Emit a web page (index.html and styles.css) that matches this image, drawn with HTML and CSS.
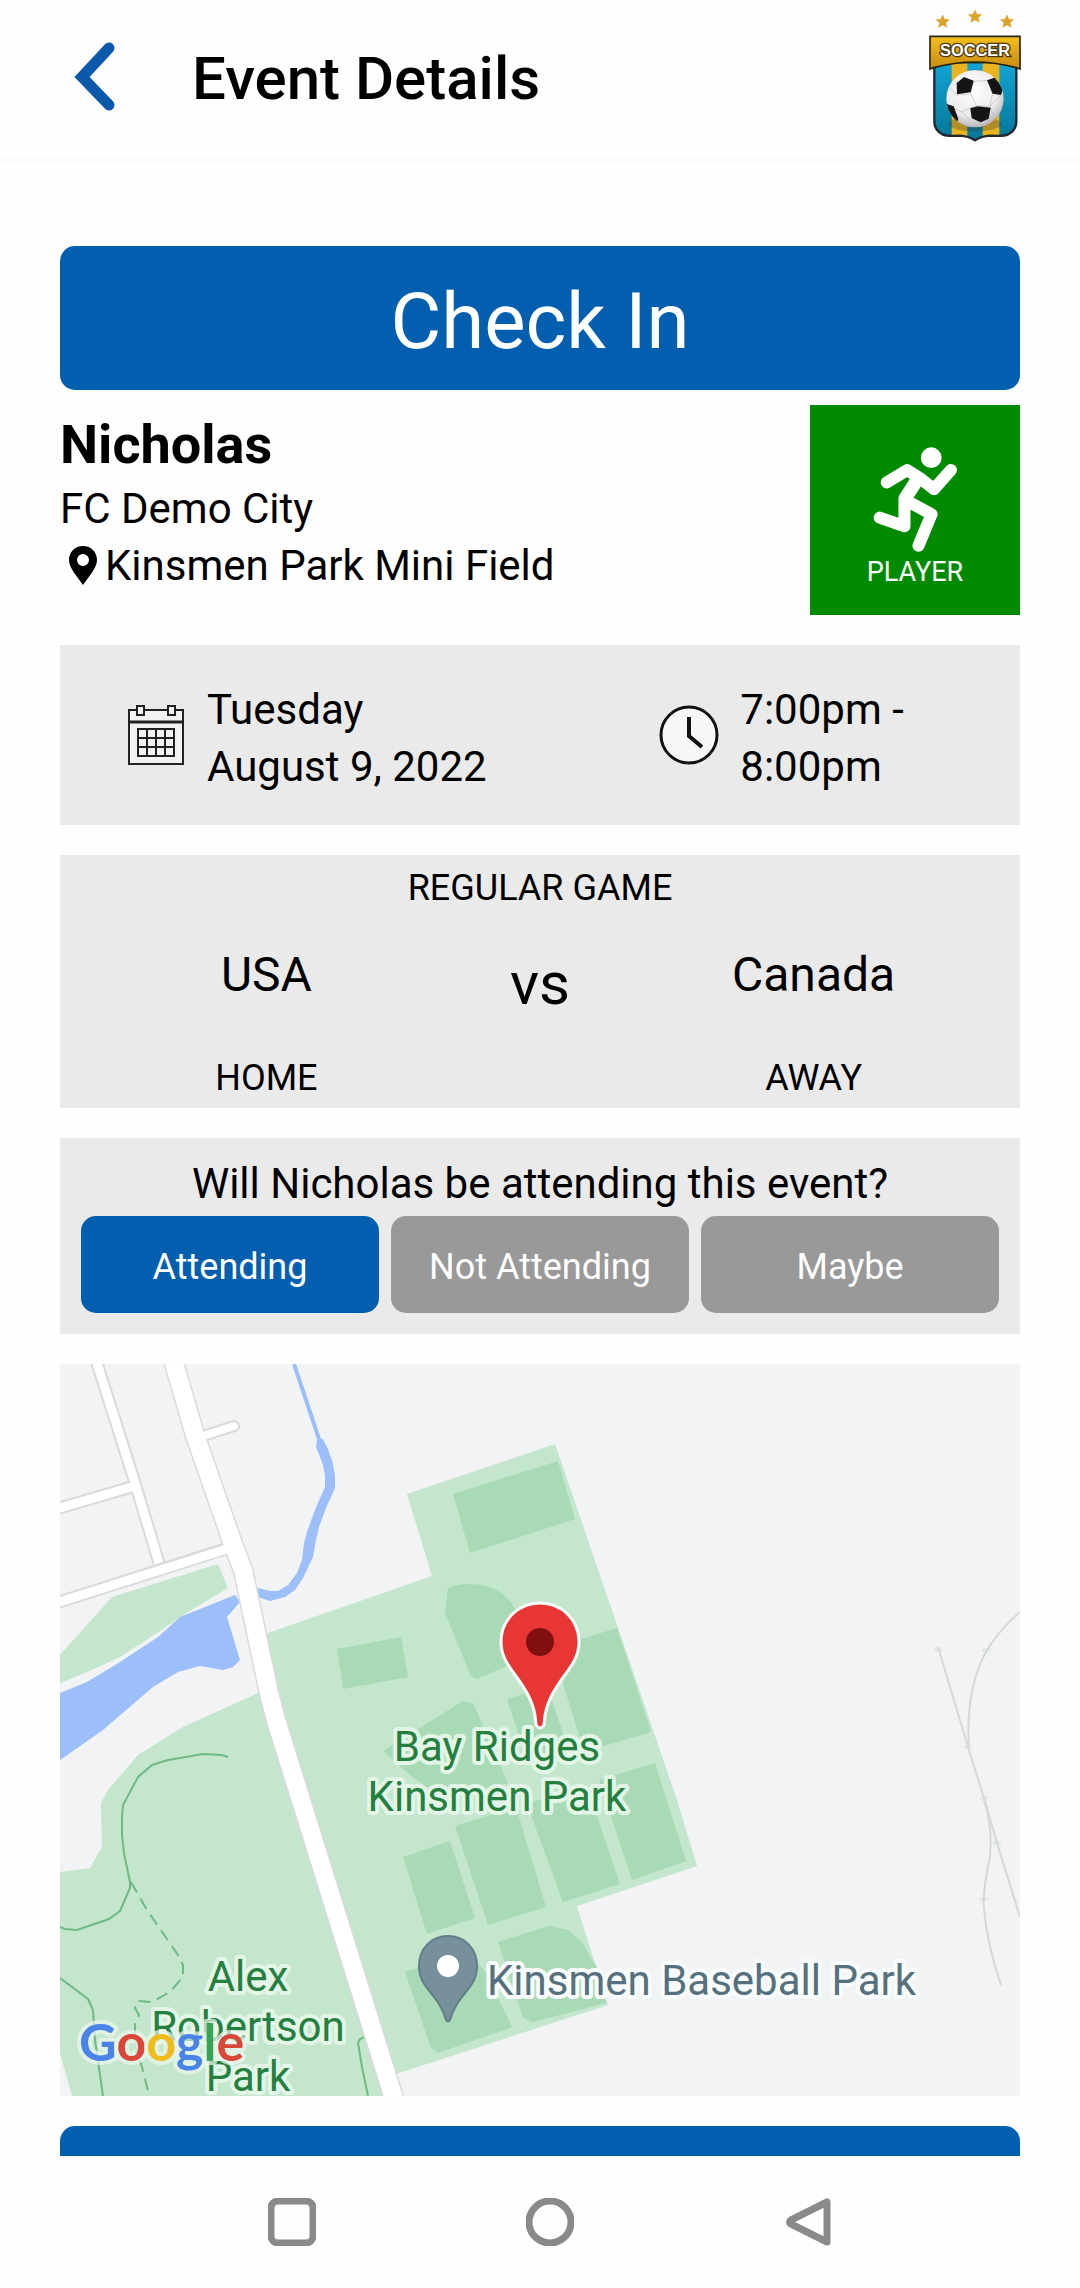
FILE: index.html
```html
<!DOCTYPE html>
<html lang="en">
<head>
<meta charset="utf-8">
<meta name="viewport" content="width=device-width, initial-scale=1">
<title>Event Details</title>
<link rel="stylesheet" href="styles.css">
</head>
<body>
<header class="topbar">
  <button class="back" aria-label="Back">
    <svg width="46" height="74" viewBox="0 0 46 74" fill="none" stroke="#0b59ab" stroke-width="11" stroke-linecap="round" stroke-linejoin="miter"><path d="M38 6L11 35L38 63"/></svg>
  </button>
  <h1 class="title">Event Details</h1>
  <svg class="crest" viewBox="0 0 276 420" role="img" aria-label="Soccer club crest">
    <defs>
      <linearGradient id="gold" x1="0" y1="0" x2="0" y2="1"><stop offset="0" stop-color="#f3bf1c"/><stop offset="1" stop-color="#c98a12"/></linearGradient>
      <linearGradient id="sky" x1="0" y1="0" x2="0" y2="1"><stop offset="0" stop-color="#12a5d6"/><stop offset="1" stop-color="#077596"/></linearGradient>
      <radialGradient id="ball" cx=".45" cy=".35" r=".7"><stop offset="0" stop-color="#fff"/><stop offset=".65" stop-color="#ececee"/><stop offset="1" stop-color="#a9a9ae"/></radialGradient>
      <clipPath id="shield"><path d="M16 160H262V338Q262 362 238 376Q225 382 190 380Q160 380 138 394Q116 380 86 380Q53 382 40 376Q16 362 16 338Z"/></clipPath>
      <clipPath id="ballClip"><circle cx="138" cy="269" r="86"/></clipPath>
      <path id="star" d="M0-20L6-7L20-6L9 3L13 17L0 10L-13 17L-9 3L-20-6L-6-7Z"/>
    </defs>
    <g fill="#dca426" stroke="#c98f1f" stroke-width="1">
      <use href="#star" x="41" y="38"/><use href="#star" x="138" y="23"/><use href="#star" x="234" y="38"/>
    </g>
    <g clip-path="url(#shield)">
      <rect x="16" y="160" width="246" height="236" fill="url(#sky)"/>
      <rect x="68" y="160" width="47" height="236" fill="#eab31f"/>
      <rect x="161" y="160" width="50" height="236" fill="#eab31f"/>
      <ellipse cx="138" cy="345" rx="80" ry="22" fill="#333" opacity=".3"/>
    </g>
    <path d="M16 160H262V338Q262 362 238 376Q225 382 190 380Q160 380 138 394Q116 380 86 380Q53 382 40 376Q16 362 16 338Z" fill="none" stroke="#20282b" stroke-width="7"/>
    <path d="M122 184Q138 180 156 184V190H122Z" fill="#123"/>
    <circle cx="138" cy="269" r="86" fill="url(#ball)"/>
    <g clip-path="url(#ballClip)">
      <path d="M125 255L133 217L178 214M125 255L85 258M125 255L142 290M182 292L191 256L178 214M182 292L215 258M85 258L52 230M98 308L142 290M142 290L182 292M98 308L55 290M98 308L125 335M182 292L200 330" fill="none" stroke="#bdbdc2" stroke-width="2"/>
      <g fill="#151515">
        <path d="M83 222L105 204L134 215L125 250L84 256Z"/>
        <path d="M174 214L200 205L222 240L216 258L191 254Z"/>
        <path d="M124 298L146 292L185 296L179 329L155 340L128 328Z"/>
        <path d="M50 284L74 292L88 330L80 350L48 320Z"/>
      </g>
    </g>
    <path d="M3 82H273V180L262 176Q138 142 14 176L3 180Z" fill="url(#gold)" stroke="#2a2412" stroke-width="5"/>
    <text x="138" y="142" class="crest-text">SOCCER</text>
  </svg>
</header>

<main class="content">
  <button class="check-in">Check In</button>

  <section class="profile">
    <div class="profile-info">
      <h2 class="name">Nicholas</h2>
      <p>FC Demo City</p>
      <p class="place">
        <svg width="28" height="39" viewBox="0 0 28 39"><path fill-rule="evenodd" d="M14 0C6 0 0 6 0 14C0 22 8 30 14 39C20 30 28 22 28 14C28 6 22 0 14 0ZM14 8A6 6 0 1 1 14 20A6 6 0 1 1 14 8Z"/></svg>
        Kinsmen Park Mini Field
      </p>
    </div>
    <div class="role">
      <svg width="87" height="107" viewBox="0 0 260 320" fill="none" stroke="#fff" stroke-width="36" stroke-linecap="round" stroke-linejoin="round">
        <circle cx="177" cy="38" r="31" fill="#fff" stroke="none"/>
        <path d="M44 112L105 75L142 98L185 132L236 75"/>
        <path d="M138 100L100 158" stroke-width="40"/>
        <path d="M97 160V243L23 217M108 169L178 207L139 301"/>
      </svg>
      <span>PLAYER</span>
    </div>
  </section>

  <section class="card schedule">
    <div class="slot">
      <svg width="60" height="60" viewBox="0 0 60 60" fill="none" stroke="#222" stroke-width="2">
        <path d="M3 5H57V59H3Z" fill="#f2f2f2"/><path d="M3 17H57" stroke-width="3"/>
        <rect x="11" y="1" width="7" height="9" fill="#f2f2f2"/><rect x="42" y="1" width="7" height="9" fill="#f2f2f2"/>
        <path d="M12 24H48V51H12ZM12 33H48M12 42H48M21 24V51M30 24V51M39 24V51"/>
      </svg>
      <p>Tuesday<br>August 9, 2022</p>
    </div>
    <div class="slot">
      <svg width="60" height="60" viewBox="0 0 60 60" fill="none" stroke="#111" stroke-width="3">
        <circle cx="30" cy="30" r="28" fill="#f7f7f7"/><path d="M30 12V31L43 42" stroke-width="4"/>
      </svg>
      <p>7:00pm -<br>8:00pm</p>
    </div>
  </section>

  <section class="card match">
    <h3 class="label">REGULAR GAME</h3>
    <div class="teams">
      <div class="team"><p class="team-name">USA</p><p class="label">HOME</p></div>
      <p class="versus">vs</p>
      <div class="team"><p class="team-name">Canada</p><p class="label">AWAY</p></div>
    </div>
  </section>

  <section class="card rsvp">
    <p>Will Nicholas be attending this event?</p>
    <div class="choices">
      <button class="choice chosen" aria-pressed="true">Attending</button>
      <button class="choice" aria-pressed="false">Not Attending</button>
      <button class="choice" aria-pressed="false">Maybe</button>
    </div>
  </section>

  <svg class="map" viewBox="0 0 960 732" role="img" aria-label="Map of Bay Ridges Kinsmen Park">
    <rect width="960" height="732" fill="#f1f3f5"/>
    <!-- parkland -->
    <g fill="#c3e6cc">
      <path d="M0 291L52 233L158 200L168 224L123 251L97 269L60 293L27 308L0 319Z"/>
      <path d="M210 325L198 329L123 363L78 391L48 426L41 439L42 483L30 504L0 508V689L12 732H333L224 386Z"/>
      <path d="M190 275L208 269L372 212L347 130L495 80L617 436L637 502L517 542L548 641L339 709L325 712L216 366Z"/>
    </g>
    <!-- playing fields -->
    <g fill="#a8dab5">
      <path d="M393 130L498 97L515 155L410 189Z"/>
      <path d="M277 285L341 273L348 313L283 325Z"/>
      <path d="M388 224Q398 220 408 220Q422 220 432 224Q460 236 465 276L447 302L417 315L411 312L385 249Z"/>
      <path d="M518 276L557 264L591 368L524 388L502 316Z"/>
      <path d="M447 335L487 323L508 383L467 396Z"/>
      <path d="M323 387L403 337L413 339L448 419L400 432L367 423L350 411Z"/>
      <path d="M343 493L390 477L415 554L367 570Z"/>
      <path d="M395 462L456 443L486 543L428 561Z"/>
      <path d="M467 440L526 420L560 520L503 538Z"/>
      <path d="M539 416L595 399L626 497L572 516Z"/>
      <path d="M438 578L489 562L508 566L523 579L530 593L536 601L546 639L473 658L463 654Z"/>
      <path d="M345 608L360 603L415 595L426 609L452 663L378 689L371 684Z"/>
    </g>
    <!-- water -->
    <path d="M234 0L260 78" stroke="#9dbff9" stroke-width="4"/>
    <g fill="#9dbff9">
      <path d="M263 75L267 83L272 96L275 111V124L266 144L259 163L256 176L253 193L243 214L235 226L225 233L210 237L198 233V224L210 227H218L228 221L237 209L242 196L244 179L247 168L252 154L257 141L265 123V111L263 101L256 83L257 76Z"/>
      <path d="M0 329L27 318L60 298L98 273L120 253L175 231L180 238L167 253L180 296L173 303L163 306L140 302L118 308L93 323L43 366L13 387L0 396Z"/>
    </g>
    <!-- trails -->
    <g fill="none" stroke="#6fb985" stroke-width="2">
      <path d="M168 393L162 391L143 390L108 396L92 401L78 413L63 441L62 453V471L64 489L70 518V524L60 547L49 555L17 566L5 565L0 563"/>
      <path d="M0 614L28 635L33 646L35 676L43 732"/>
      <path d="M305 673L300 675L298 679L302 703L308 732"/>
      <path stroke-dasharray="12 7" d="M71 518L87 546L118 591L123 601V613L110 628L92 638L77 637L75 644L79 651L75 659V683L82 703L88 727L91 732"/>
    </g>
    <!-- roads: casing, then surface -->
    <g fill="none" stroke="#d9dadc" stroke-linejoin="round">
      <path stroke-width="13" d="M36 -4L75 119L99 199M-4 145L75 122M-4 239L165 185"/>
      <path stroke-width="12" stroke-linecap="round" d="M140 73L174 62"/>
      <path stroke-width="21" d="M113 -4L135 71L173 180L183 206L209 329L216 356L335 738"/>
    </g>
    <g fill="none" stroke="#fff" stroke-linejoin="round">
      <path stroke-width="9" d="M36 -4L75 119L99 199M-4 145L75 122M-4 239L170 184"/>
      <path stroke-width="8" stroke-linecap="round" d="M140 73L174 62"/>
      <path stroke-width="18" d="M113 -4L135 71L173 180L183 206L209 329L216 356L335 738"/>
    </g>
    <!-- rail -->
    <g fill="none" stroke="#d5d7d9" stroke-width="2">
      <path d="M878 283L908 383L924 434L937 479L960 553"/>
      <path d="M960 248Q940 265 927 286Q905 325 909 383"/>
      <path d="M924 436Q933 465 930 493Q922 530 924 545Q927 580 941 621"/>
      <path d="M874 286H882M922 286H931M904 383H912M920 434H928M933 479H941M920 535H928" stroke-width="3" opacity=".5"/>
    </g>
    <!-- pins and labels -->
    <g class="park-label">
      <text x="437" y="397">Bay Ridges</text><text x="437" y="447">Kinsmen Park</text>
      <text x="188" y="627">Alex</text><text x="188" y="677">Robertson</text><text x="188" y="727">Park</text>
    </g>
    <path d="M388 572C371 572 359 585 359 602C359 625 379 630 386 656Q388 659 390 656C397 630 417 625 417 602C417 585 405 572 388 572Z" fill="#78909c" stroke="#5f7d88" stroke-width="2"/>
    <circle cx="388" cy="602" r="11" fill="#fff"/>
    <text x="427" y="631" class="poi-label">Kinsmen Baseball Park</text>
    <path d="M480 239C458 239 441 256 441 278C441 300 458 310 469 333C476 347 475 353 476 361Q480 367 484 361C485 353 484 347 491 333C502 310 519 300 519 278C519 256 502 239 480 239Z" fill="#e83635" stroke="#fff" stroke-width="3"/>
    <circle cx="480" cy="278" r="14" fill="#821010"/>
    <text x="19" y="697" class="brand"><tspan fill="#4a84e8">G</tspan><tspan fill="#d8473a">o</tspan><tspan fill="#f1bb1c">o</tspan><tspan fill="#4a84e8">g</tspan><tspan fill="#36a455">l</tspan><tspan fill="#d8473a">e</tspan></text>
  </svg>

  <button class="check-in" aria-label="Directions"></button>
</main>

<nav class="system-nav" aria-label="System">
  <button aria-label="Recent apps"><svg width="48" height="48" viewBox="0 0 48 48"><rect x="3" y="3" width="42" height="42" rx="7"/></svg></button>
  <button aria-label="Home"><svg width="48" height="48" viewBox="0 0 48 48"><circle cx="24" cy="24" r="21"/></svg></button>
  <button aria-label="Go back"><svg width="48" height="48" viewBox="0 0 48 48"><path d="M43 4V44L7 26Q4 24 7 22Z" stroke-linejoin="round"/></svg></button>
</nav>
</body>
</html>
```
FILE: styles.css
```css
* { box-sizing: border-box; }

body {
  margin: 0;
  height: 100vh;
  display: flex;
  flex-direction: column;
  background: #fefefe;
  color: #000;
  font-family: Roboto, "Liberation Sans", sans-serif;
  font-size: 42px;
  line-height: 57px;
}

h1, h2, h3, p { margin: 0; font-weight: 400; }
button { border: 0; padding: 0; font: inherit; cursor: pointer; }
svg { display: block; flex: none; }

.topbar {
  display: flex;
  align-items: center;
  flex: none;
  height: 161px;
  padding: 0 59px 1px 71px;
  border-bottom: 2px solid #f9f9f9;
}
.back { background: none; }
.title { flex: 1; padding-left: 75px; font-size: 60px; font-weight: 500; line-height: 72px; }
.crest { width: 92px; height: 140px; }
.crest-text {
  font: 700 49px "Liberation Sans", sans-serif;
  text-anchor: middle;
  fill: #fff;
  stroke: #4a3a12;
  stroke-width: 8px;
  paint-order: stroke;
}

.content {
  flex: 1;
  min-height: 0;
  overflow-y: auto;
  scrollbar-width: none;
  padding: 85px 60px 0;
}

.check-in {
  display: block;
  width: 100%;
  height: 144px;
  padding-top: 6px;
  border-radius: 15px;
  background: #025eaf;
  color: #fff;
  font-size: 78px;
}

.profile { display: flex; justify-content: space-between; margin: 15px 0 30px; }
.profile-info { padding-top: 8px; }
.name { margin-bottom: 3px; font-size: 54px; font-weight: 700; line-height: 64px; }
.place { display: flex; align-items: center; gap: 8px; padding-left: 9px; }
.role {
  display: flex;
  flex-direction: column;
  align-items: center;
  gap: 2px;
  width: 210px;
  height: 210px;
  padding-top: 40px;
  background: #008a00;
  color: #fff;
  font-size: 27px;
  line-height: 36px;
}

.card { margin-bottom: 30px; background: #eaeaea; }

.schedule { display: grid; grid-template-columns: 5fr 4fr; height: 180px; }
.slot { display: flex; align-items: center; gap: 21px; padding-left: 66px; }
.slot p { padding-top: 6px; }

.match { padding: 9px 0 5px; text-align: center; }
.label { font-size: 36px; line-height: 49px; }
.teams { display: grid; grid-template-columns: 43fr 14fr 43fr; }
.team-name { padding: 33px 0 51px; font-size: 48px; }
.versus { padding-top: 42px; font-size: 60px; }

.rsvp { padding: 17px 21px 21px; text-align: center; }
.choices { display: grid; grid-template-columns: repeat(3, 1fr); gap: 12px; margin-top: 4px; }
.choice { height: 97px; padding-top: 6px; border-radius: 15px; background: #999; color: #fff; font-size: 36px; }
.chosen { background: #025eaf; }

.map { width: 100%; height: auto; margin-bottom: 30px; }
.park-label, .poi-label { font-size: 42px; stroke-width: 8px; stroke-linejoin: round; paint-order: stroke; }
.park-label { fill: #25803f; stroke: #e2f5e7; text-anchor: middle; }
.poi-label { fill: #56707d; stroke: #f8fcfc; }
.brand {
  font: 700 52px Lato, sans-serif;
  stroke: rgba(235, 247, 238, .7);
  stroke-width: 8px;
  stroke-linejoin: round;
  paint-order: stroke;
}

.system-nav {
  display: grid;
  grid-template-columns: repeat(3, 1fr);
  flex: none;
  height: 132px;
  padding: 0 143px 0 163px;
  background: #fefefe;
}
.system-nav button { display: flex; align-items: center; justify-content: center; background: none; }
.system-nav svg { fill: none; stroke: #8a8a8a; stroke-width: 7px; }
```
